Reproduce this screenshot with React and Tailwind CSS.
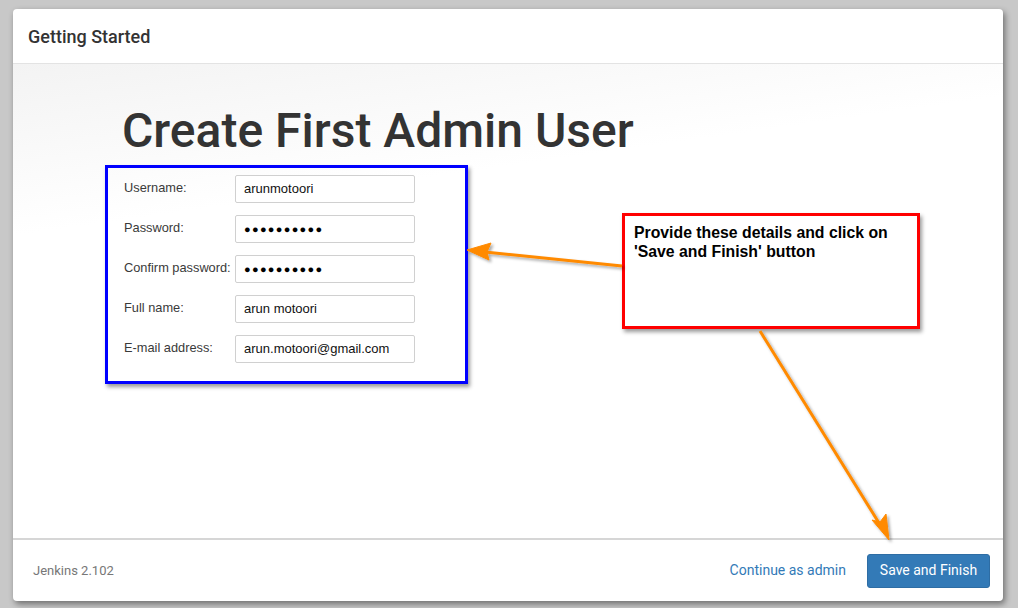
import React from 'react';

const fields = [
  { label: 'Username:', value: 'arunmotoori' },
  { label: 'Password:', value: 'abcdefghij', secret: true },
  { label: 'Confirm password:', value: 'abcdefghij', secret: true },
  { label: 'Full name:', value: 'arun motoori' },
  { label: 'E-mail address:', value: 'arun.motoori@gmail.com' },
];

function Arrows() {
  return (
    <svg className="absolute inset-0 pointer-events-none" width="1018" height="608" viewBox="0 0 1018 608">
      <defs>
        <filter id="sh" x="-20%" y="-20%" width="140%" height="140%">
          <feDropShadow dx="2" dy="2" stdDeviation="1.5" floodColor="#000" floodOpacity="0.35" />
        </filter>
      </defs>
      <g filter="url(#sh)" fill="#ff8a00" stroke="#ff8a00">
        <line x1="622" y1="266" x2="485" y2="252" strokeWidth="3" />
        <polygon points="467,250 491,243 487,252 489,260" strokeWidth="1" strokeLinejoin="round" />
        <line x1="760" y1="331" x2="879" y2="523" strokeWidth="3" />
        <polygon points="889,540 872,520 880,522 886,514" strokeWidth="1" strokeLinejoin="round" />
      </g>
    </svg>
  );
}

export default function App() {
  return (
    <div className="relative w-[1018px] h-[608px] bg-[#c8c8c8] pt-[9px] pl-[13px] overflow-hidden">
      <div className="w-[990px] h-[592px] bg-white rounded-[4px] shadow-[2px_3px_6px_rgba(0,0,0,0.45)] flex flex-col overflow-hidden">
        <div className="h-[55px] border-b border-[#e3e3e3] px-[15px] flex items-center">
          <span className="text-[18px] font-medium text-[#333]" style={{ fontFamily: 'Roboto, sans-serif' }}>Getting Started</span>
        </div>

        <div className="flex-1 bg-[linear-gradient(172deg,#f3f3f3_0%,#ffffff_28%)] pl-[92px] pt-[40px]">
          <h1 className="pl-[17px] text-[48px] leading-[53px] font-medium text-[#333]" style={{ fontFamily: 'Roboto, sans-serif' }}>
            Create First Admin User
          </h1>

          <div className="mt-[8px] w-[363px] h-[219px] border-[3px] border-[#0000ff] shadow-[2px_3px_4px_rgba(0,0,0,0.4)] pl-[16px] pt-[7px] flex flex-col gap-[12px]" style={{ fontFamily: '"Liberation Sans", Arial, sans-serif' }}>
            {fields.map(f => (
              <div key={f.label} className="flex items-start">
                <label className="w-[111px] text-[12.8px] text-[#3a3a3a] pt-[3px] whitespace-nowrap">{f.label}</label>
                <div className="w-[180px] h-[28px] border border-[#d0d0d0] rounded-[2px] px-[8px] flex items-center bg-white">
                  {f.secret ? (
                    <span className="text-[11px] tracking-[1.3px] text-black">●●●●●●●●●●</span>
                  ) : (
                    <span className="text-[13px] text-[#111]">{f.value}</span>
                  )}
                </div>
              </div>
            ))}
          </div>
        </div>

        <div className="h-[63px] border-t-2 border-[#d6d6d6] flex items-center pl-[20px] pr-[13px]" style={{ fontFamily: 'Roboto, sans-serif' }}>
          <span className="text-[13px] text-[#777]">Jenkins 2.102</span>
          <span className="ml-auto text-[14px] text-[#337ab7]">Continue as admin</span>
          <button className="ml-[21px] w-[123px] h-[34px] bg-[#337ab7] border border-[#2e6da4] rounded-[3px] text-white text-[14px]">
            Save and Finish
          </button>
        </div>
      </div>

      <div className="absolute left-[622px] top-[213px] w-[298px] h-[116px] bg-white border-[3px] border-[#ff0000] shadow-[2px_3px_4px_rgba(0,0,0,0.4)] px-[9px] pt-[7px]" style={{ fontFamily: '"Liberation Sans", Arial, sans-serif' }}>
        <p className="text-[15.8px] leading-[19px] font-bold text-black">
          Provide these details and click on<br />'Save and Finish' button
        </p>
      </div>

      <Arrows />
    </div>
  );
}
